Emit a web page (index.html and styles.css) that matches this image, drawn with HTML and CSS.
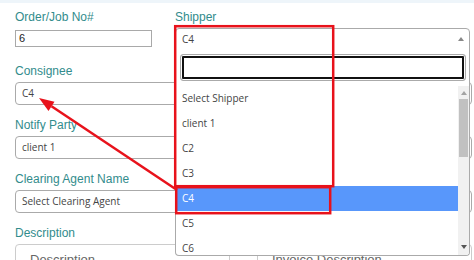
FILE: index.html
```html
<!DOCTYPE html>
<html>
<head>
<link rel="stylesheet" href="styles.css">
</head>
<body>

<div class="topband"></div>

<div class="page">

<div class="row1">
  <div class="field order">
    <div class="lbl">Order/Job No#</div>
    <div class="txtinput">6</div>
  </div>
  <div class="field shipper">
    <div class="lbl">Shipper</div>
    <div class="sel open">C4<span class="arrow up"></span></div>
  </div>
</div>

<div class="fields">
  <div class="col">
    <div class="field">
      <div class="lbl">Consignee</div>
      <div class="sel">C4</div>
    </div>
    <div class="field">
      <div class="lbl">Notify Party</div>
      <div class="sel">client 1</div>
    </div>
    <div class="field">
      <div class="lbl">Clearing Agent Name</div>
      <div class="sel">Select Clearing Agent</div>
    </div>
    <div class="field">
      <div class="lbl">Description</div>
      <div class="area">Description</div>
    </div>
  </div>
  <div class="col">
    <div class="field">
      <div class="lbl">Port of Loading</div>
      <div class="sel">Select Port</div>
    </div>
    <div class="field">
      <div class="lbl">Port of Discharge</div>
      <div class="sel">Select Port</div>
    </div>
    <div class="field">
      <div class="lbl">Invoice No</div>
      <div class="sel">Invoice No</div>
    </div>
    <div class="field">
      <div class="lbl">Invoice Description</div>
      <div class="area">Invoice Description</div>
    </div>
  </div>
</div>

</div>

<!-- open select2 dropdown for Shipper -->
<div class="dropdown">
  <div class="searchwrap"><div class="search"></div></div>
  <div class="list">
    <div class="options">
      <div class="opt">Select Shipper</div>
      <div class="opt">client 1</div>
      <div class="opt">C2</div>
      <div class="opt">C3</div>
      <div class="opt hl">C4</div>
      <div class="opt">C5</div>
      <div class="opt">C6</div>
    </div>
    <div class="scrollbar">
      <div class="sbtn"><span class="arrow up"></span></div>
      <div class="thumb"></div>
      <div class="sbtn bottom"><span class="arrow down"></span></div>
    </div>
  </div>
</div>

<!-- annotation -->
<svg class="marks" width="474" height="260" viewBox="0 0 474 260">
  <rect x="175.2" y="26.2" width="158" height="160" fill="none" stroke="#e8121b" stroke-width="2.5"/>
  <rect x="176.2" y="187.2" width="154" height="26" fill="none" stroke="#e8121b" stroke-width="2.5"/>
  <line x1="177" y1="190" x2="51.5" y2="106.3" stroke="#e8121b" stroke-width="2.5"/>
  <polygon points="39,98 54.5,101.7 48.5,110.9" fill="#e8121b"/>
</svg>

</body>
</html>
```

FILE: styles.css
```css
body {
  margin: 0;
  background: #fff;
  width: 474px;
  height: 260px;
  overflow: hidden;
  position: relative;
}

.topband {
  height: 3px;
  background: #eef5fa;
}

.page {
  padding: 7px 0 0 15px;
}

.lbl {
  font-family: "Liberation Sans", Arial, sans-serif;
  font-size: 12px;
  line-height: 15px;
  color: #328c8c;
  white-space: nowrap;
}

.row1 {
  display: flex;
  align-items: flex-start;
  margin-bottom: 13px;
}

.order {
  width: 160px;
}

.order .txtinput {
  margin-top: 5px;
}

.shipper {
  width: 295px;
}

.shipper .sel {
  margin-top: 3px;
}

.txtinput {
  box-sizing: border-box;
  width: 137px;
  height: 17px;
  border: 1px solid #a9a9a9;
  padding: 0 3px;
  font-family: "Liberation Sans", Arial, sans-serif;
  font-size: 11px;
  line-height: 15px;
  color: #222;
}

.sel {
  box-sizing: border-box;
  position: relative;
  height: 23px;
  border: 1px solid #aaa;
  border-radius: 4px;
  padding-left: 6px;
  font-family: "Open Sans", "Noto Sans", sans-serif;
  font-size: 10px;
  line-height: 21px;
  color: #444;
  background: #fff;
  white-space: nowrap;
}

.sel.open {
  border-radius: 4px 4px 0 0;
}

.arrow {
  display: block;
  width: 0;
  height: 0;
  border-left: 3.5px solid transparent;
  border-right: 3.5px solid transparent;
}

.arrow.up {
  border-bottom: 4px solid #888;
}

.arrow.down {
  border-top: 4px solid #555;
}

.sel .arrow {
  position: absolute;
  right: 5px;
  top: 8px;
}

.fields {
  display: grid;
  grid-template-columns: 215px 215px;
  column-gap: 27px;
}

.field .sel {
  margin-top: 3px;
}

.col .field {
  margin-bottom: 13px;
}

.area {
  box-sizing: border-box;
  margin-top: 3px;
  height: 50px;
  border: 1px solid #ccc;
  border-radius: 4px;
  padding: 7px 14px;
  font-family: "Liberation Sans", Arial, sans-serif;
  font-size: 13px;
  line-height: 15px;
  color: #666;
}

.dropdown {
  position: absolute;
  left: 175px;
  top: 50px;
  box-sizing: border-box;
  width: 295px;
  height: 206px;
  border: 1px solid #aaa;
  border-top: none;
  border-radius: 0 0 4px 4px;
  background: #fff;
  overflow: hidden;
}

.searchwrap {
  padding: 4px 3px 5px 4px;
}

.search {
  box-sizing: border-box;
  height: 27px;
  border: 1px solid #aaa;
  border-radius: 3px;
  box-shadow: inset 0 0 0 1px #fff, inset 0 0 0 3px #111;
}

.list {
  display: flex;
}

.options {
  flex: 1;
}

.opt {
  height: 25px;
  line-height: 25px;
  padding-left: 6px;
  font-family: "Open Sans", "Noto Sans", sans-serif;
  font-size: 10px;
  color: #444;
}

.opt.hl {
  background: #5897fb;
  color: #fff;
}

.scrollbar {
  position: relative;
  width: 11px;
  height: 175px;
  background: #f1f1f1;
}

.sbtn {
  height: 13px;
  display: flex;
  align-items: center;
  justify-content: center;
}

.sbtn .arrow.up {
  border-bottom-color: #a3a3a3;
}

.sbtn.bottom {
  position: absolute;
  left: 0;
  right: 0;
  top: 154px;
}

.thumb {
  width: 9px;
  margin-left: 1px;
  height: 58px;
  background: #c1c1c1;
}

.marks {
  position: absolute;
  left: 0;
  top: 0;
}
```
